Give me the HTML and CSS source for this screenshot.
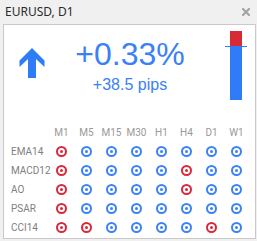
FILE: index.html
```html
<!DOCTYPE html>
<html>
<head>
  <title>EURUSD, D1</title>
  <link rel="stylesheet" href="styles.css">
</head>
<body>
  <div class="titlebar">
    <span class="title">EURUSD, D1</span>
    <svg class="close" width="8" height="8" viewBox="0 0 8 8">
      <path d="M1 1 L7 7 M7 1 L1 7" stroke="#a3a3a3" stroke-width="2.2" stroke-linecap="square"/>
    </svg>
  </div>

  <div class="panel">
    <div class="summary">
      <svg class="arrow" width="26" height="30" viewBox="0 0 26 30">
        <path d="M13 0 L25.5 12.5 L25.5 19 L17 11 L17 30 L9 30 L9 11 L0.5 19 L0.5 12.5 Z" fill="#2f7df6"/>
      </svg>
      <div class="change">
        <div class="percent">+0.33%</div>
        <div class="pips">+38.5 pips</div>
      </div>
      <svg class="bar" width="22" height="69" viewBox="0 0 22 69">
        <rect x="5" y="0" width="12" height="15" fill="#d62a36"/>
        <rect x="5" y="15" width="12" height="54" fill="#2f7bf8"/>
        <rect x="0" y="15" width="22" height="1" fill="#2f7bf8"/>
      </svg>
    </div>

    <div class="signals">
      <span></span>
      <span class="tf">M1</span><span class="tf">M5</span><span class="tf">M15</span><span class="tf">M30</span>
      <span class="tf">H1</span><span class="tf">H4</span><span class="tf">D1</span><span class="tf">W1</span>

      <span class="ind">EMA14</span>
      <i class="dot sell"></i><i class="dot buy"></i><i class="dot buy"></i><i class="dot buy"></i>
      <i class="dot buy"></i><i class="dot buy"></i><i class="dot buy"></i><i class="dot buy"></i>

      <span class="ind">MACD12</span>
      <i class="dot sell"></i><i class="dot buy"></i><i class="dot buy"></i><i class="dot buy"></i>
      <i class="dot buy"></i><i class="dot sell"></i><i class="dot buy"></i><i class="dot buy"></i>

      <span class="ind">AO</span>
      <i class="dot sell"></i><i class="dot buy"></i><i class="dot buy"></i><i class="dot buy"></i>
      <i class="dot buy"></i><i class="dot sell"></i><i class="dot buy"></i><i class="dot buy"></i>

      <span class="ind">PSAR</span>
      <i class="dot sell"></i><i class="dot buy"></i><i class="dot buy"></i><i class="dot buy"></i>
      <i class="dot buy"></i><i class="dot buy"></i><i class="dot buy"></i><i class="dot buy"></i>

      <span class="ind">CCI14</span>
      <i class="dot sell"></i><i class="dot sell"></i><i class="dot buy"></i><i class="dot buy"></i>
      <i class="dot buy"></i><i class="dot buy"></i><i class="dot sell"></i><i class="dot buy"></i>
    </div>
  </div>
</body>
</html>
```

FILE: styles.css
```css
body {
  margin: 0;
  padding: 0;
  background-color: #f0f0f0;
  font-family: "Liberation Sans", Arial, sans-serif;
}
.titlebar {
  height: 24px;
  display: flex;
  align-items: center;
  justify-content: space-between;
  padding: 0 7px 0 5px;
}
.title {
  font-family: "Noto Sans", sans-serif;
  font-size: 12px;
  color: #2b2b2b;
  margin-top: -1px;
}
.close {
  margin-top: -1px;
}
.panel {
  margin: 0 1px 0 3px;
  height: 213px;
  background-color: #ffffff;
  border: 1px solid #c9c9c9;
}
.summary {
  height: 76px;
  display: flex;
  align-items: flex-start;
}
.summary > * {
  flex-shrink: 0;
}
.arrow {
  margin: 23px 0 0 15px;
}
.change {
  width: 136px;
  margin: 11px 0 0 17px;
  text-align: center;
  color: #3a80f6;
}
.percent {
  font-size: 32px;
  line-height: 36px;
}
.pips {
  font-size: 16px;
  line-height: 18px;
  margin-top: 4px;
}
.bar {
  margin: 6px 0 0 27px;
}
.signals {
  display: grid;
  grid-template-columns: 38px repeat(8, 25px);
  grid-template-rows: 20px repeat(5, 19px);
  margin-top: 21px;
  padding-left: 7px;
  font-family: Roboto, sans-serif;
  font-size: 10px;
  align-items: center;
}
.tf {
  text-align: center;
  color: #999999;
}
.ind {
  color: #808080;
}
.dot {
  width: 11px;
  height: 11px;
  box-sizing: border-box;
  border: 2px solid;
  border-radius: 50%;
  justify-self: center;
  display: flex;
  align-items: center;
  justify-content: center;
}
.dot::after {
  content: "";
  width: 3px;
  height: 3px;
  border-radius: 50%;
  background-color: currentColor;
}
.buy {
  color: #3a82f7;
}
.sell {
  color: #d9283a;
}
```
